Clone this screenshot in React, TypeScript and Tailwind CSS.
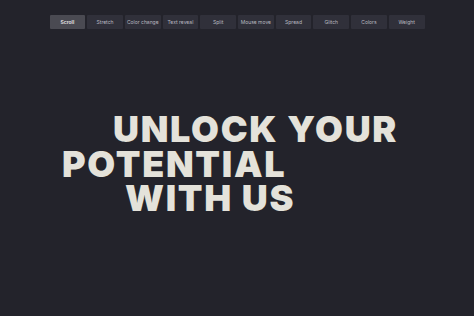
const tabs = ['Scroll', 'Stretch', 'Color change', 'Text reveal', 'Split', 'Mouse move', 'Spread', 'Glitch', 'Colors', 'Weight']

export default function App() {
  return (
    <div className="w-[474px] h-[316px] overflow-hidden bg-[#23232b] font-['Inter',sans-serif]">
      <div className="pt-[15px] grid grid-cols-10 gap-[2px] w-[375px] mx-auto">
        {tabs.map((t, i) => (
          <div
            key={t}
            className={`h-[14px] flex items-center justify-center rounded-[1px] text-[5px] leading-none ${
              i === 0 ? 'bg-[#4a4a52] text-[#e8e8ea] font-semibold' : 'bg-[#30303a] text-[#b9b9c0]'
            }`}
          >
            {t}
          </div>
        ))}
      </div>

      <div className="mt-[83px] font-black text-[#e4e2da] text-[36px] leading-[34.5px] tracking-[1.7px]">
        <div className="pl-[113px]">UNLOCK YOUR</div>
        <div className="pl-[62px]">POTENTIAL</div>
        <div className="pl-[125px]">WITH US</div>
      </div>
    </div>
  )
}
